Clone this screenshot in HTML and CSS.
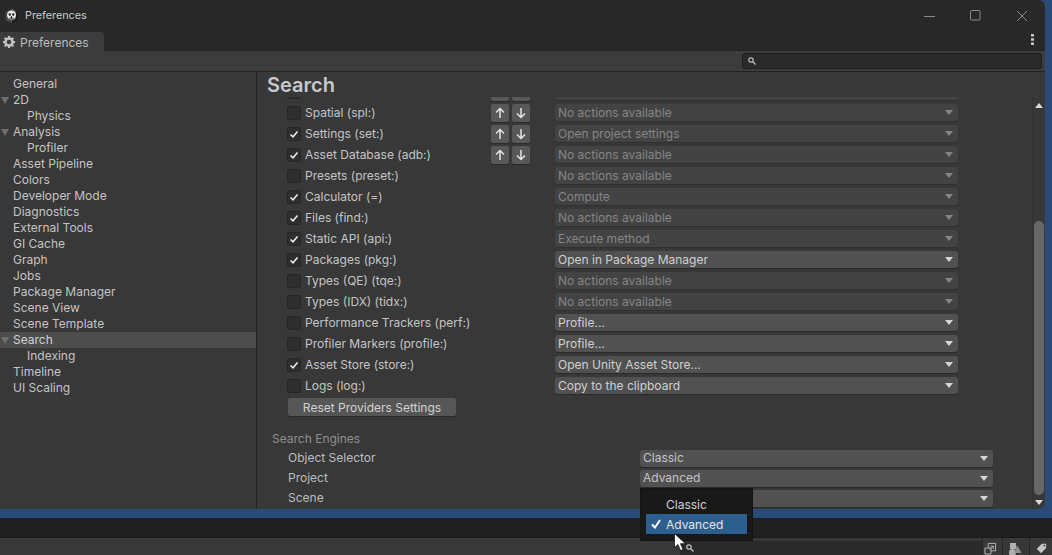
FILE: index.html
```html
<!DOCTYPE html>
<html lang="en">
<head>
<meta charset="utf-8">
<title>Preferences</title>
<link rel="stylesheet" href="styles.css">
</head>
<body>
<div class="window">
  <header class="titlebar">
    <svg class="app-icon" viewBox="0 0 16 16" width="16" height="16"><path d="M8 .5 14.500 4v8L8 15.500 1.500 12V4Z" fill="#4a4a4a"/><path d="M8 15.500 14.500 12V4L12 3v8L8 13Z" fill="#1c1c1c"/><circle cx="7.500" cy="7" r="4.500" fill="#e8e8e8"/><circle cx="5.800" cy="6.500" r="1.200" fill="#222"/><circle cx="9.200" cy="6.500" r="1.200" fill="#222"/><path d="M7.500 8v3M6 9.500v1.500M9 9.500v1.500" stroke="#222"/></svg>
    <span class="title-text">Preferences</span>
    <div class="win-controls">
      <svg viewBox="0 0 12 12" width="12" height="12"><path d="M0 6.500h11" stroke="#8a8a8a"/></svg>
      <svg viewBox="0 0 12 12" width="12" height="12"><rect x=".5" y=".5" width="9.500" height="9.500" rx="1" fill="none" stroke="#8a8a8a"/></svg>
      <svg viewBox="0 0 12 12" width="12" height="12"><path d="M1 1l10 10M11 1 1 11" stroke="#8a8a8a"/></svg>
    </div>
  </header>
  <div class="tabbar">
    <div class="tab">
      <svg viewBox="0 0 12 12" width="12" height="12"><path d="M5 0h2l.3 1.600 1.200.5L9.900 1.200l1.100 1.100-.9 1.400.5 1.200 1.500.2v1.800l-1.500.3-.5 1.200.9 1.300-1.100 1.200-1.400-.9-1.200.5L7 12H5l-.3-1.500-1.200-.5-1.300.9L1 9.700l.9-1.300-.5-1.200L0 6.900V5.100l1.400-.2.500-1.200L1 2.300l1.200-1.100 1.300.9 1.200-.5Zm1 3.700a2.300 2.300 0 1 0 0 4.600 2.300 2.300 0 0 0 0-4.600Z" fill="#c4c4c4" fill-rule="evenodd"/></svg>
      <span>Preferences</span>
    </div>
    <svg class="kebab" viewBox="0 0 3 11" width="3" height="11"><path d="M0 0h3v2.500H0zM0 4.200h3v2.500H0zM0 8.500h3V11H0z" fill="#c8c8c8"/></svg>
  </div>
  <div class="toolbar">
    <div class="search-field">
      <svg viewBox="0 0 8 8" width="8" height="8"><circle cx="3" cy="3" r="2.200" fill="none" stroke="#c4c4c4" stroke-width="1.200"/><path d="M4.800 4.800 7.500 7.500" stroke="#c4c4c4" stroke-width="1.300"/></svg>
    </div>
  </div>
  <main class="content">
    <nav class="sidebar">
      <div class="nav-item">General</div>
      <div class="nav-item"><i class="fold"></i>2D</div>
      <div class="nav-item sub">Physics</div>
      <div class="nav-item"><i class="fold"></i>Analysis</div>
      <div class="nav-item sub">Profiler</div>
      <div class="nav-item">Asset Pipeline</div>
      <div class="nav-item">Colors</div>
      <div class="nav-item">Developer Mode</div>
      <div class="nav-item">Diagnostics</div>
      <div class="nav-item">External Tools</div>
      <div class="nav-item">GI Cache</div>
      <div class="nav-item">Graph</div>
      <div class="nav-item">Jobs</div>
      <div class="nav-item">Package Manager</div>
      <div class="nav-item">Scene View</div>
      <div class="nav-item">Scene Template</div>
      <div class="nav-item selected"><i class="fold"></i>Search</div>
      <div class="nav-item sub">Indexing</div>
      <div class="nav-item">Timeline</div>
      <div class="nav-item">UI Scaling</div>
    </nav>
    <section class="panel">
      <h1 class="panel-title">Search</h1>
      <div class="panel-body">
        <div class="scroll-area">
          <div class="row clipped">
            <span class="check"></span><span class="row-label"></span>
            <span class="arrows"><span class="arrow-btn"></span><span class="arrow-btn"></span></span>
            <span class="drop off"></span>
          </div>
          <div class="row">
            <span class="check"></span><span class="row-label">Spatial (spl:)</span>
            <span class="arrows"><span class="arrow-btn"><svg viewBox="0 0 12 12"><path d="M6 11V2M2 5.500 6 1.500l4 4" fill="none" stroke="#e4e4e4" stroke-width="1.500"/></svg></span><span class="arrow-btn"><svg viewBox="0 0 12 12"><path d="M6 1v9M2 6.500l4 4 4-4" fill="none" stroke="#e4e4e4" stroke-width="1.500"/></svg></span></span>
            <span class="drop off">No actions available</span>
          </div>
          <div class="row">
            <span class="check on"><svg viewBox="0 0 10 10"><path d="M1.500 5.500 4 7.800 8.500 2.500" fill="none" stroke="#eee" stroke-width="1.500"/></svg></span><span class="row-label">Settings (set:)</span>
            <span class="arrows"><span class="arrow-btn"><svg viewBox="0 0 12 12"><path d="M6 11V2M2 5.500 6 1.500l4 4" fill="none" stroke="#e4e4e4" stroke-width="1.500"/></svg></span><span class="arrow-btn"><svg viewBox="0 0 12 12"><path d="M6 1v9M2 6.500l4 4 4-4" fill="none" stroke="#e4e4e4" stroke-width="1.500"/></svg></span></span>
            <span class="drop off">Open project settings</span>
          </div>
          <div class="row">
            <span class="check on"><svg viewBox="0 0 10 10"><path d="M1.500 5.500 4 7.800 8.500 2.500" fill="none" stroke="#eee" stroke-width="1.500"/></svg></span><span class="row-label">Asset Database (adb:)</span>
            <span class="arrows"><span class="arrow-btn"><svg viewBox="0 0 12 12"><path d="M6 11V2M2 5.500 6 1.500l4 4" fill="none" stroke="#e4e4e4" stroke-width="1.500"/></svg></span><span class="arrow-btn"><svg viewBox="0 0 12 12"><path d="M6 1v9M2 6.500l4 4 4-4" fill="none" stroke="#e4e4e4" stroke-width="1.500"/></svg></span></span>
            <span class="drop off">No actions available</span>
          </div>
          <div class="row">
            <span class="check"></span><span class="row-label">Presets (preset:)</span><span class="arrows"></span>
            <span class="drop off">No actions available</span>
          </div>
          <div class="row">
            <span class="check on"><svg viewBox="0 0 10 10"><path d="M1.500 5.500 4 7.800 8.500 2.500" fill="none" stroke="#eee" stroke-width="1.500"/></svg></span><span class="row-label">Calculator (=)</span><span class="arrows"></span>
            <span class="drop off">Compute</span>
          </div>
          <div class="row">
            <span class="check on"><svg viewBox="0 0 10 10"><path d="M1.500 5.500 4 7.800 8.500 2.500" fill="none" stroke="#eee" stroke-width="1.500"/></svg></span><span class="row-label">Files (find:)</span><span class="arrows"></span>
            <span class="drop off">No actions available</span>
          </div>
          <div class="row">
            <span class="check on"><svg viewBox="0 0 10 10"><path d="M1.500 5.500 4 7.800 8.500 2.500" fill="none" stroke="#eee" stroke-width="1.500"/></svg></span><span class="row-label">Static API (api:)</span><span class="arrows"></span>
            <span class="drop off">Execute method</span>
          </div>
          <div class="row">
            <span class="check on"><svg viewBox="0 0 10 10"><path d="M1.500 5.500 4 7.800 8.500 2.500" fill="none" stroke="#eee" stroke-width="1.500"/></svg></span><span class="row-label">Packages (pkg:)</span><span class="arrows"></span>
            <span class="drop">Open in Package Manager</span>
          </div>
          <div class="row">
            <span class="check"></span><span class="row-label">Types (QE) (tqe:)</span><span class="arrows"></span>
            <span class="drop off">No actions available</span>
          </div>
          <div class="row">
            <span class="check"></span><span class="row-label">Types (IDX) (tidx:)</span><span class="arrows"></span>
            <span class="drop off">No actions available</span>
          </div>
          <div class="row">
            <span class="check"></span><span class="row-label">Performance Trackers (perf:)</span><span class="arrows"></span>
            <span class="drop">Profile...</span>
          </div>
          <div class="row">
            <span class="check"></span><span class="row-label">Profiler Markers (profile:)</span><span class="arrows"></span>
            <span class="drop">Profile...</span>
          </div>
          <div class="row">
            <span class="check on"><svg viewBox="0 0 10 10"><path d="M1.500 5.500 4 7.800 8.500 2.500" fill="none" stroke="#eee" stroke-width="1.500"/></svg></span><span class="row-label">Asset Store (store:)</span><span class="arrows"></span>
            <span class="drop">Open Unity Asset Store...</span>
          </div>
          <div class="row">
            <span class="check"></span><span class="row-label">Logs (log:)</span><span class="arrows"></span>
            <span class="drop">Copy to the clipboard</span>
          </div>
          <button class="reset">Reset Providers Settings</button>
          <div class="engines-title">Search Engines</div>
          <div class="engine"><span class="engine-label">Object Selector</span><span class="drop wide">Classic</span></div>
          <div class="engine"><span class="engine-label">Project</span><span class="drop wide">Advanced</span></div>
          <div class="engine"><span class="engine-label">Scene</span><span class="drop wide"></span></div>
        </div>
        <div class="scrollbar">
          <i class="sb-up"></i>
          <div class="sb-thumb"></div>
          <i class="sb-down"></i>
        </div>
      </div>
    </section>
  </main>
</div>
<div class="lower-dark"></div>
<div class="lower-bar">
  <div class="lower-search">
    <svg viewBox="0 0 8 8" width="8" height="8"><circle cx="3" cy="3" r="2.200" fill="none" stroke="#c4c4c4" stroke-width="1.200"/><path d="M4.800 4.800 7.500 7.500" stroke="#c4c4c4" stroke-width="1.300"/></svg>
  </div>
  <div class="lower-tool expand"><svg viewBox="0 0 14 14" width="13" height="13"><path d="M1 6.500h6.500V13H1Z M4.500 6.500V1.500h8v8h-5" fill="none" stroke="#bdbdbd"/><path d="M6 8.500l4-4M7 4.500h3v3" fill="none" stroke="#bdbdbd"/></svg></div>
  <div class="lower-tool shapes"><svg viewBox="0 0 14 14" width="14" height="14"><rect x="2" y="1" width="6" height="6" fill="#b0b0b0"/><circle cx="4.500" cy="10.500" r="3.500" fill="#b0b0b0"/><path d="M9 3l4.500 8H6.500Z" fill="#8f8f8f"/></svg></div>
  <div class="lower-tool tag"><svg viewBox="0 0 14 14" width="12" height="12"><path d="M8 2h5v5l-6 6-5-5Z" fill="#c4c4c4"/><circle cx="10.800" cy="4.200" r="1" fill="#333"/></svg></div>
</div>
<div class="popup">
  <div class="popup-item">Classic</div>
  <div class="popup-item current">
    <svg viewBox="0 0 10 10" width="10" height="10"><path d="M1 5.500 4 8.500 9 1" fill="none" stroke="#fff" stroke-width="2"/></svg>
    Advanced
  </div>
</div>
<svg class="cursor" viewBox="0 0 12 18" width="12" height="18"><path d="M.5.500v14l3.500-3 2.500 6 2.500-1-2.500-5.800h5Z" fill="#fff" stroke="#000" stroke-width=".7"/></svg>
</body>
</html>
```
FILE: styles.css
```css
* { box-sizing: border-box; }
html, body { margin: 0; padding: 0; height: 555px; overflow: hidden; }
body {
  position: relative;
  background: #2a4a78;
  font-family: Inter, "Liberation Sans", sans-serif;
  font-size: 12px;
  color: #c4c4c4;
}
.window {
  width: 1045px;
  height: 509px;
  display: flex;
  flex-direction: column;
  background: #383838;
  border-radius: 0 7px 7px 0;
  overflow: hidden;
}
.titlebar {
  height: 32px;
  flex: none;
  display: flex;
  align-items: center;
  padding: 0 0 1px 4px;
  background: #282828;
  color: #c8c8c8;
  font-size: 10.8px;
}
.app-icon { flex: none; margin-right: 5px; }
.win-controls {
  margin-left: auto;
  display: flex;
  gap: 34px;
  padding-right: 17px;
}
.tabbar {
  height: 19px;
  flex: none;
  display: flex;
  align-items: stretch;
  background: #282828;
  position: relative;
  border-bottom: 1px solid #232323;
}
.tab {
  width: 104px;
  display: flex;
  align-items: center;
  gap: 5px;
  padding: 1px 0 0 3px;
  background: #3c3c3c;
  border-radius: 0 3px 0 0;
  margin-bottom: -1px;
  font-size: 12px;
  color: #bdbdbd;
}
.kebab { margin: 2px 11px 0 auto; }
.toolbar {
  height: 21px;
  flex: none;
  display: flex;
  justify-content: flex-end;
  align-items: center;
  background: #3c3c3c;
  border-bottom: 1px solid #232323;
  padding-right: 3px;
}
.search-field {
  width: 300px;
  height: 16px;
  display: flex;
  align-items: center;
  padding-left: 5px;
  background: #2a2a2a;
  border: 1px solid #1f1f1f;
  border-radius: 3px;
}
.content { flex: 1; display: flex; min-height: 0; }
.sidebar {
  width: 257px;
  flex: none;
  padding-top: 4px;
  border-right: 1px solid #232323;
}
.nav-item {
  height: 16px;
  line-height: 16px;
  padding-left: 13px;
  position: relative;
  white-space: nowrap;
}
.nav-item.sub { padding-left: 27px; }
.nav-item.selected { background: #4d4d4d; color: #d2d2d2; }
.fold {
  position: absolute;
  left: 1px;
  top: 5px;
  border-left: 4px solid transparent;
  border-right: 4px solid transparent;
  border-top: 7px solid #6f6f6f;
}
.panel { flex: 1; min-width: 0; display: flex; flex-direction: column; }
.panel-title {
  margin: 0;
  height: 25px;
  flex: none;
  padding: 1px 0 0 10px;
  font-size: 20px;
  line-height: 25px;
  font-weight: 600;
  color: #c8c8c8;
}
.panel-body { flex: 1; display: flex; min-height: 0; }
.scroll-area { flex: 1; min-width: 0; overflow: hidden; padding-left: 30px; }
.row {
  height: 21px;
  display: flex;
  align-items: center;
}
.row.clipped { margin-top: -16px; }
.check {
  width: 14px;
  height: 14px;
  flex: none;
  display: flex;
  align-items: center;
  justify-content: center;
  background: #2e2e2e;
  border: 1px solid #262626;
  border-radius: 2px;
}
.check svg { width: 10px; height: 10px; }
.row-label { width: 190px; flex: none; padding-left: 4px; white-space: nowrap; }
.arrows { width: 64px; flex: none; display: flex; gap: 3px; }
.arrow-btn {
  width: 18px;
  height: 18px;
  display: flex;
  align-items: center;
  justify-content: center;
  background: #585858;
  border-radius: 2px;
  box-shadow: 0 1px 0 #2a2a2a;
}
.arrow-btn svg { width: 12px; height: 12px; }
.drop {
  width: 403px;
  height: 17px;
  flex: none;
  display: flex;
  align-items: center;
  padding-left: 3px;
  position: relative;
  background: #515151;
  border-radius: 3px;
  box-shadow: 0 1px 0 #2a2a2a;
  color: #d0d0d0;
  white-space: nowrap;
}
.drop::after {
  content: "";
  position: absolute;
  right: 5px;
  top: 6px;
  border-left: 4px solid transparent;
  border-right: 4px solid transparent;
  border-top: 5px solid #d6d6d6;
}
.drop.off { background: #434343; color: #858585; box-shadow: 0 1px 0 #303030; }
.drop.off::after { border-top-color: #858585; }
.drop.wide { width: 353px; padding-bottom: 1px; color: #c4c4c4; }
.reset {
  display: block;
  width: 168px;
  height: 18px;
  margin: 2px 0 0 1px;
  padding: 0;
  background: #565656;
  border: 0;
  border-radius: 2px;
  box-shadow: 0 1px 0 #2a2a2a;
  color: #d2d2d2;
  font: inherit;
}
.engines-title { margin: 14px 0 0 -15px; height: 18px; line-height: 18px; color: #8f8f8f; }
.engine { height: 20px; display: flex; align-items: center; }
.engine-label { width: 353px; flex: none; padding: 0 0 1px 1px; color: #bdbdbd; }
.scrollbar {
  width: 13px;
  flex: none;
  position: relative;
  border-left: 1px solid #323232;
  display: flex;
  flex-direction: column;
  align-items: center;
  padding-bottom: 4px;
}
.sb-up {
  margin-top: 6px;
  border-left: 4px solid transparent;
  border-right: 4px solid transparent;
  border-bottom: 5px solid #d8d8d8;
}
.sb-thumb {
  width: 10px;
  margin-top: 113px;
  flex: 1;
  background: #676767;
  border-radius: 5px;
}
.sb-down {
  margin-top: 5px;
  border-left: 4px solid transparent;
  border-right: 4px solid transparent;
  border-top: 5px solid #d8d8d8;
}
.lower-dark {
  position: absolute;
  left: 0; right: 0; top: 518px;
  height: 20px;
  background: #202020;
  border-bottom: 1px solid #1a1a1a;
}
.lower-bar {
  position: absolute;
  left: 0; right: 0; top: 538px;
  height: 17px;
  background: #383838;
  display: flex;
  justify-content: flex-end;
  align-items: stretch;
}
.lower-search {
  width: 302px;
  margin-top: 3px;
  padding-left: 6px;
  background: #2a2a2a;
  display: flex;
  align-items: center;
}
.lower-tool { display: flex; align-items: flex-start; border-left: 1px solid #262626; padding-top: 4px; }
.lower-tool.expand { width: 20px; padding-left: 1px; }
.lower-tool.shapes { width: 27px; padding-left: 5px; }
.lower-tool.tag { width: 23px; padding-left: 5px; }
.popup {
  position: absolute;
  left: 640px;
  top: 488px;
  width: 113px;
  height: 53px;
  padding: 5px;
  background: #191919;
  border: 1px solid #141414;
  color: #d0d0d0;
}
.popup-item {
  height: 20px;
  display: flex;
  align-items: center;
  gap: 5px;
  padding-left: 20px;
  white-space: nowrap;
}
.popup-item.current { padding-left: 5px; background: #2d5f8e; color: #e4e4e4; }
.cursor { position: absolute; left: 674px; top: 533px; }
```
